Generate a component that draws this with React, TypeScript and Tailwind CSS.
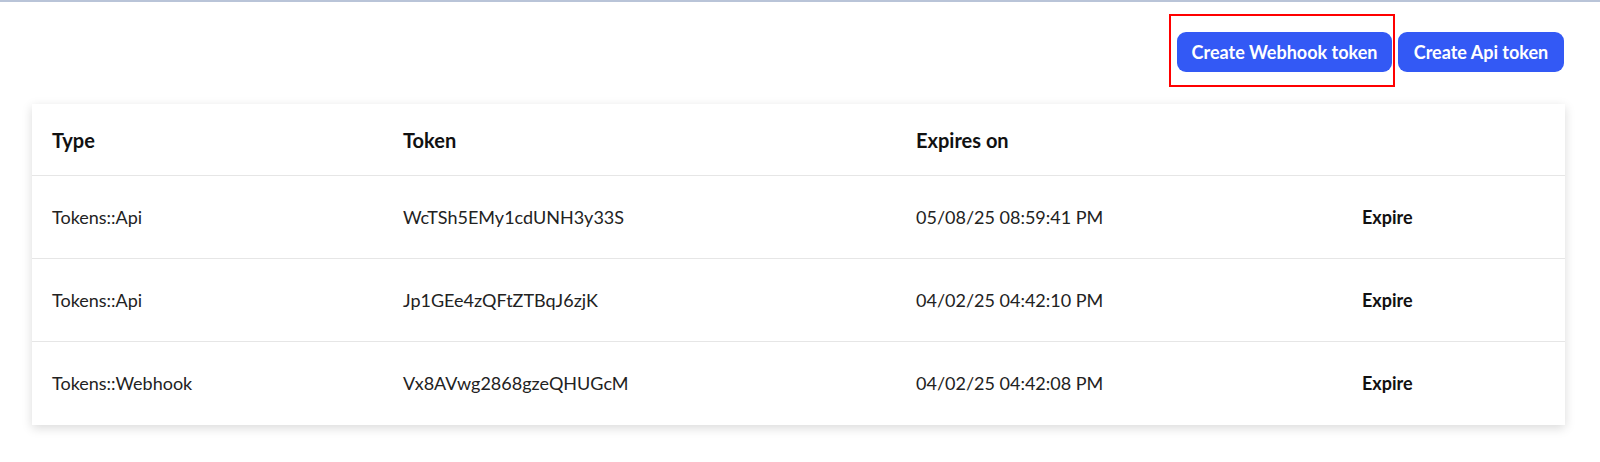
import React from "react";

const rows = [
  { type: "Tokens::Api", token: "WcTSh5EMy1cdUNH3y33S", expires: "05/08/25 08:59:41 PM" },
  { type: "Tokens::Api", token: "Jp1GEe4zQFtZTBqJ6zjK", expires: "04/02/25 04:42:10 PM" },
  { type: "Tokens::Webhook", token: "Vx8AVwg2868gzeQHUGcM", expires: "04/02/25 04:42:08 PM" },
];

export default function App() {
  return (
    <div
      className="w-full h-screen bg-white text-[#111] border-t-2 border-[#b9c4d8] overflow-hidden"
      style={{ fontFamily: "Lato, 'Open Sans', Arial, sans-serif" }}
    >
      <div className="flex justify-end items-start pr-[36px] pt-[12px]">
        <div className="border-2 border-[#f00] pt-[16px] pb-[13px] pl-[6px] pr-[1px]">
          <button className="h-[40px] w-[215px] rounded-[9px] bg-[#3359f5] text-white font-bold text-[18px] leading-none">
            Create Webhook token
          </button>
        </div>
        <button className="mt-[18px] ml-[3px] h-[40px] w-[166px] rounded-[9px] bg-[#3359f5] text-white font-bold text-[18px] leading-none">
          Create Api token
        </button>
      </div>
      <div className="ml-[32px] mr-[35px] mt-[17px] bg-white shadow-[0_3px_10px_rgba(0,0,0,0.15)]">
        <div className="grid grid-cols-[351px_513px_446px_1fr] h-[72px] items-center pl-[20px] border-b border-[#e6e6e6] text-[20px] font-bold">
          <div>Type</div>
          <div>Token</div>
          <div>Expires on</div>
          <div></div>
        </div>
        {rows.map((r, i) => (
          <div
            key={i}
            className={`grid grid-cols-[351px_513px_446px_1fr] h-[83px] items-center pl-[20px] text-[18px] text-[#222] ${
              i < rows.length - 1 ? "border-b border-[#e6e6e6]" : ""
            }`}
          >
            <div>{r.type}</div>
            <div>{r.token}</div>
            <div>{r.expires}</div>
            <div className="font-bold text-[#111]">Expire</div>
          </div>
        ))}
      </div>
    </div>
  );
}
